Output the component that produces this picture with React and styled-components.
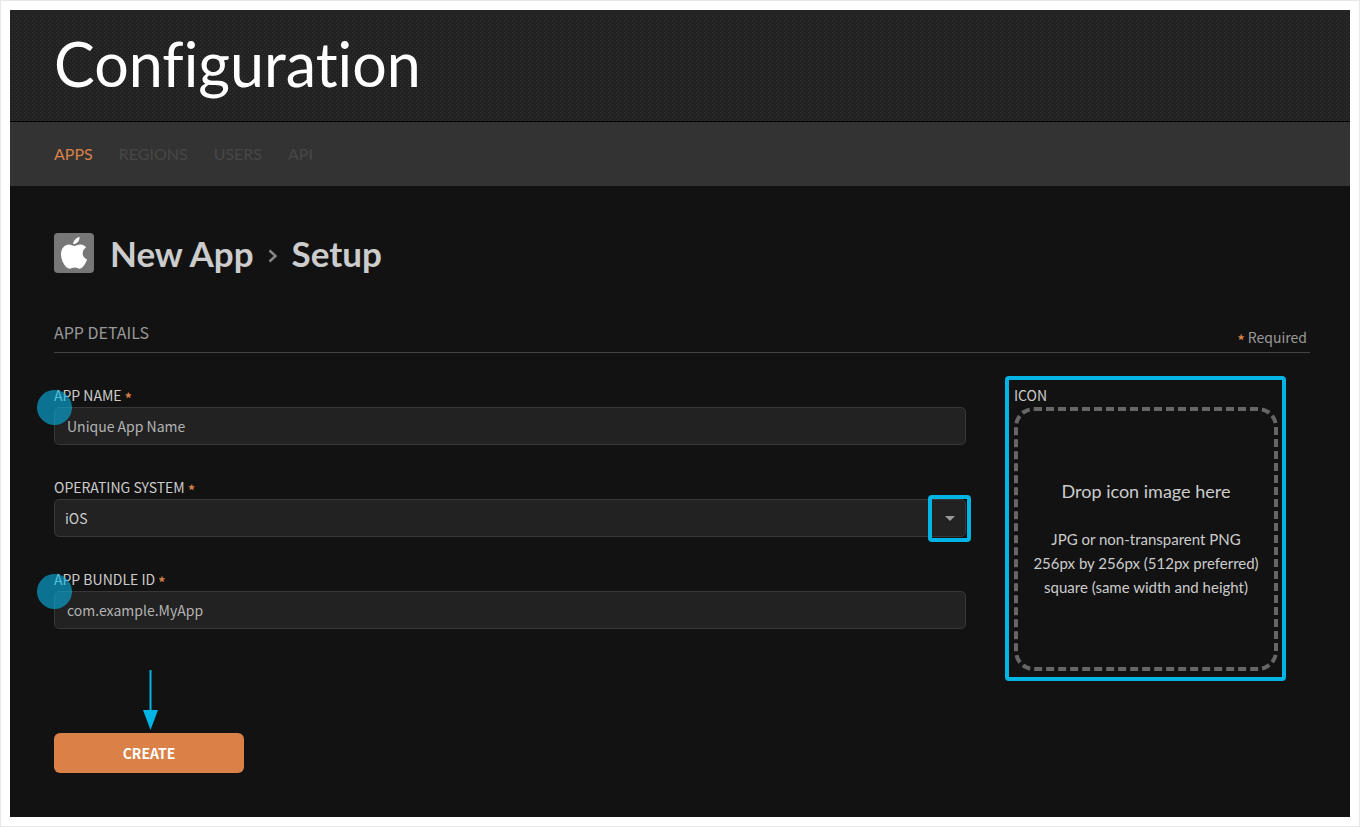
import React from "react";
import styled, { createGlobalStyle } from "styled-components";

const display = `"Century Gothic", "URW Gothic", Lato, sans-serif`;
const body = `"Noto Sans CJK SC", "Noto Sans", sans-serif`;

const GlobalStyle = createGlobalStyle`
  * {
    box-sizing: border-box;
  }
  body {
    margin: 0;
    background: #fff;
    font-family: ${body};
    font-size: 14px;
    line-height: 24px;
    color: #ccc;
  }
  h1, h2, h3, p {
    margin: 0;
    font-weight: 400;
  }
`;

const Frame = styled.div`
  display: flex;
  flex-direction: column;
  min-height: 100vh;
  padding: 9px;
  border: 1px solid #e8e8e8;
`;

const Panel = styled.div`
  display: flex;
  flex-direction: column;
  flex: 1;
  background: #121212;
`;

const Header = styled.header`
  padding: 18px 44px 21px;
  border-bottom: 1px solid #000;
  background-color: #222;
  /* two offset grids of single-pixel dots */
  background-image: conic-gradient(from 270deg at 1px 1px, #333 25%, transparent 0),
    conic-gradient(from 270deg at 1px 1px, #333 25%, transparent 0);
  background-size: 4px 4px;
  background-position: 0 0, 2px 2px;
`;

const PageTitle = styled.h1`
  font-family: ${display};
  font-size: 61px;
  line-height: 72px;
  font-weight: 400;
  font-variant-ligatures: none;
  color: #fff;
`;

const Nav = styled.nav`
  display: flex;
  gap: 26px;
  padding: 20px 44px;
  background: #333;
`;

const NavLink = styled.a`
  font-family: ${display};
  font-size: 16px;
  line-height: 24px;
  text-decoration: none;
  color: ${({ $active }) => ($active ? "#d98147" : "#474747")};
`;

const Content = styled.main`
  padding: 44px 40px 44px 44px;
`;

const Heading = styled.div`
  display: flex;
  align-items: center;
  gap: 16px;
  height: 46px;
`;

const AppIcon = styled.div`
  display: flex;
  align-items: center;
  justify-content: center;
  width: 40px;
  height: 40px;
  border-radius: 4px;
  background: #777;
`;

const Crumbs = styled.h2`
  display: flex;
  align-items: center;
  gap: 14px;
  font-family: ${display};
  font-size: 35px;
  line-height: 40px;
  font-weight: 700;
`;

const SectionHeader = styled.div`
  display: flex;
  justify-content: space-between;
  margin-top: 44px;
  padding-right: 3px;
  border-bottom: 1px solid #444;
  color: #999;
`;

const SectionTitle = styled.h3`
  font-size: 16px;
  line-height: 24px;
  padding-bottom: 8px;
`;

const RequiredNote = styled.p`
  padding-top: 5px;
`;

const Star = styled.span`
  font-weight: 700;
  line-height: 1;
  vertical-align: -3px;
  color: #d98147;
`;

const Form = styled.form`
  display: grid;
  grid-template-columns: 1fr 281px;
  gap: 39px;
  align-items: start;
  padding: 23px 24px 0 0;
`;

const Fields = styled.div`
  display: flex;
  flex-direction: column;
  gap: 30px;
  padding-top: 7px;
`;

const Field = styled.div`
  position: relative;
  display: flex;
  flex-direction: column;
`;

const Marker = styled.span`
  position: absolute;
  top: 7px;
  left: -17px;
  width: 35px;
  height: 35px;
  border-radius: 50%;
  background: rgba(6, 180, 230, 0.6);
`;

const TextInput = styled.input`
  width: 100%;
  height: 38px;
  padding: 0 12px;
  border: 1px solid #383838;
  border-radius: 5px;
  background: #222;
  font: inherit;
  color: #ccc;

  &::placeholder {
    color: #b3b3b3;
    opacity: 1;
  }
`;

const SelectWrap = styled.div`
  position: relative;
`;

const Select = styled.select`
  display: block;
  width: 100%;
  height: 38px;
  padding: 0 10px;
  appearance: none;
  border: 1px solid #383838;
  border-radius: 5px;
  background: #222;
  font: inherit;
  color: #ccc;
`;

const SelectHighlight = styled.span`
  position: absolute;
  top: -4px;
  right: -5px;
  display: flex;
  align-items: center;
  justify-content: center;
  width: 43px;
  height: 47px;
  border: 4px solid #00b4e6;
  border-radius: 4px;
  pointer-events: none;
`;

const Caret = styled.span`
  border: 5px solid transparent;
  border-top-color: #999;
  border-bottom: 0;
`;

const DropPanel = styled.div`
  padding: 3px 4px 6px 5px;
  border: 4px solid #00b4e6;
  border-radius: 4px;
`;

const DropZone = styled.div`
  display: flex;
  flex-direction: column;
  justify-content: center;
  gap: 24px;
  height: 264px;
  border: 4px dashed #666;
  border-radius: 20px;
  font-family: ${display};
  text-align: center;
`;

const DropTitle = styled.p`
  font-size: 18px;
  line-height: 24px;
`;

const DropHint = styled.p`
  font-size: 15px;
  line-height: 24px;
`;

const Actions = styled.div`
  position: relative;
  padding-top: 74px;
`;

const Arrow = styled.svg`
  position: absolute;
  left: 89px;
  bottom: 43px;
`;

const CreateButton = styled.button`
  display: block;
  width: 190px;
  height: 40px;
  border: 0;
  border-radius: 6px;
  background: #d98147;
  font: inherit;
  font-weight: 700;
  color: #fff;
`;

const links = ["APPS", "REGIONS", "USERS", "API"];

const AppleLogo = () => (
  <svg width="28" height="34" viewBox="0 0 28 34" fill="#fff" aria-hidden="true">
    <path d="M19.600 1c.2 3.600-2.600 7.200-6.300 7.300C13 5 16.200 1.400 19.600 1zM14.400 10c1.500 0 3.200-1.500 6-1.500 2.300 0 4.500 1.300 5.700 3.100-5.100 3-4.200 9.900 1 12-1.300 3.700-4.500 9.200-7.500 9.200-2 0-2.600-1.200-5-1.200s-3.100 1.200-5 1.200C6 32.800 1 25.300 1 18.600c0-6.300 3.800-10 8-10 2.300 0 3.900 1.400 5.400 1.400z" />
  </svg>
);

const ChevronIcon = () => (
  <svg width="10" height="20" viewBox="0 0 10 20" fill="none" stroke="#888" strokeWidth="2.400" aria-hidden="true">
    <path d="M1.500 7.500l6 5.500-6 5.500" />
  </svg>
);

const Label = ({ htmlFor, children }) => (
  <label htmlFor={htmlFor}>
    {children} <Star>*</Star>
  </label>
);

const App = () => (
  <>
    <GlobalStyle />
    <Frame>
      <Panel>
        <Header>
          <PageTitle>Configuration</PageTitle>
        </Header>
        <Nav>
          {links.map((link, i) => (
            <NavLink key={link} href="#" $active={i === 0}>
              {link}
            </NavLink>
          ))}
        </Nav>
        <Content>
          <Heading>
            <AppIcon>
              <AppleLogo />
            </AppIcon>
            <Crumbs>
              <span>New App</span>
              <ChevronIcon />
              <span>Setup</span>
            </Crumbs>
          </Heading>
          <SectionHeader>
            <SectionTitle>APP DETAILS</SectionTitle>
            <RequiredNote>
              <Star>*</Star> Required
            </RequiredNote>
          </SectionHeader>
          <Form onSubmit={(e) => e.preventDefault()}>
            <Fields>
              <Field>
                <Label htmlFor="name">APP NAME</Label>
                <TextInput id="name" placeholder="Unique App Name" />
                <Marker />
              </Field>
              <Field>
                <Label htmlFor="os">OPERATING SYSTEM</Label>
                <SelectWrap>
                  <Select id="os" defaultValue="iOS">
                    <option>iOS</option>
                    <option>Android</option>
                  </Select>
                  <SelectHighlight>
                    <Caret />
                  </SelectHighlight>
                </SelectWrap>
              </Field>
              <Field>
                <Label htmlFor="bundle">APP BUNDLE ID</Label>
                <TextInput id="bundle" placeholder="com.example.MyApp" />
                <Marker />
              </Field>
              <Actions>
                <Arrow width="15" height="60" viewBox="0 0 15 60" fill="#00b4e6" aria-hidden="true">
                  <path d="M6.500 0h2v40H15L7.500 60 0 40h6.500z" />
                </Arrow>
                <CreateButton type="submit">CREATE</CreateButton>
              </Actions>
            </Fields>
            <DropPanel>
              <span>ICON</span>
              <DropZone>
                <DropTitle>Drop icon image here</DropTitle>
                <DropHint>
                  JPG or non-transparent PNG
                  <br />
                  256px by 256px (512px preferred)
                  <br />
                  square (same width and height)
                </DropHint>
              </DropZone>
            </DropPanel>
          </Form>
        </Content>
      </Panel>
    </Frame>
  </>
);

export default App;
